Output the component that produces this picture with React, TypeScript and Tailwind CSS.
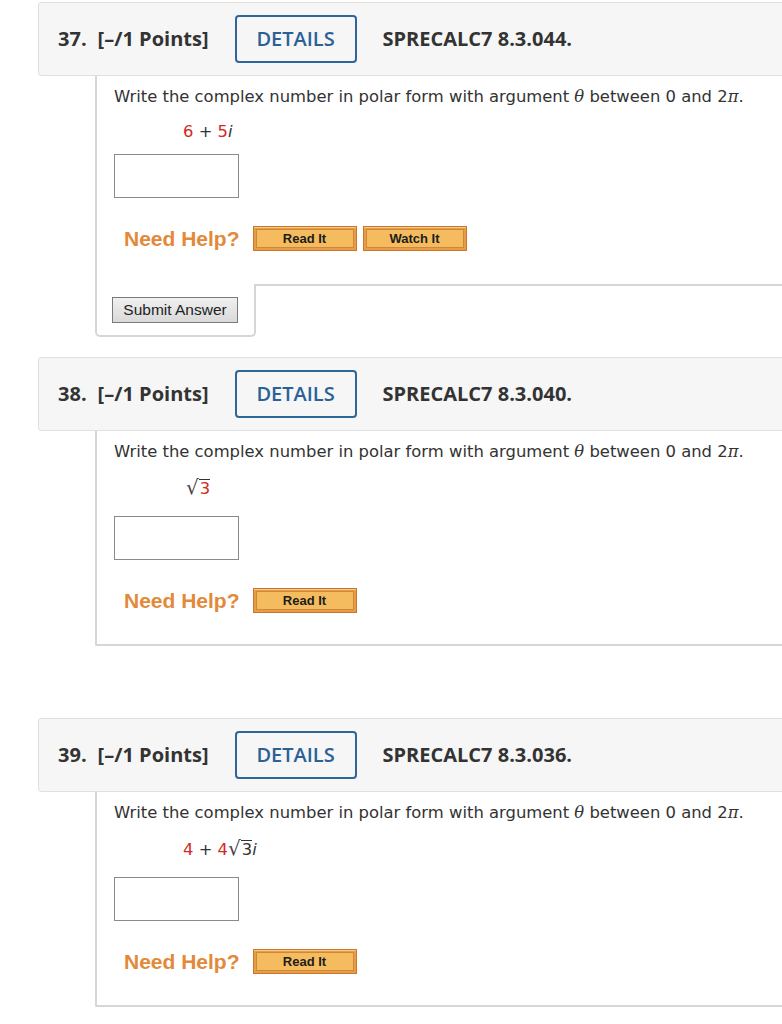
import type { ReactNode } from "react";

const openSans = { fontFamily: '"Open Sans", "Liberation Sans", sans-serif' };

function HelpButton({ label }: { label: string }) {
  return (
    <button className="h-[25px] w-[104px] border border-[#c9782a] bg-[#e69c48] p-[2px] shadow-[inset_0_1px_0_#f6c98c]">
      <span className="flex h-full w-full items-center justify-center border border-[#cf8838] bg-[#f4bc5e] font-['Liberation_Sans',Arial,sans-serif] text-[13px] font-bold leading-none text-[#1c1c1c]">
        {label}
      </span>
    </button>
  );
}

function Header({ num, code }: { num: number; code: string }) {
  return (
    <div
      className="ml-[38px] flex h-[74px] items-center rounded-[3px] border border-[#e0e0e0] bg-[#f6f6f6] pl-[19px] text-[20px] font-bold text-[#333]"
      style={openSans}
    >
      <span>{num}.</span>
      <span className="ml-[11px]">[–/1 Points]</span>
      <button className="ml-[26px] flex h-[48px] w-[122px] items-center justify-center rounded-[4px] border-2 border-[#2f6699] text-[20px] font-semibold text-[#2b6196]">
        DETAILS
      </button>
      <span className="ml-[26px]">{code}</span>
    </div>
  );
}

// radical sign + overlined radicand, sits on the text baseline
function Sqrt({ children }: { children: ReactNode }) {
  return (
    <>
      <span className="text-[20px] text-[#444]">√</span>
      <span className="inline-block border-t border-[#333] pl-[1px] leading-[17px]">{children}</span>
    </>
  );
}

function Prompt() {
  return (
    <div className="flex h-[22px] items-center whitespace-pre">
      Write the complex number in polar form with argument{" "}
      <i className="font-['DejaVu_Serif',serif]">θ</i> between 0 and 2
      <i className="font-['DejaVu_Serif',serif]">π</i>.
    </div>
  );
}

function Question({
  num,
  code,
  math,
  tall,
  watch,
  submit,
}: {
  num: number;
  code: string;
  math: ReactNode;
  tall?: boolean;
  watch?: boolean;
  submit?: boolean;
}) {
  return (
    <div>
      <Header num={num} code={code} />
      <div
        className={`ml-[95px] border-l-2 border-[#d6d6d6] pl-[17px] pt-[10px] font-['DejaVu_Sans',Verdana,sans-serif] text-[16.4px] text-[#333] ${
          submit ? "pb-[33px]" : "border-b-2 rounded-bl-[2px] pb-[31px]"
        }`}
      >
        <Prompt />
        <div
          className={`ml-[69px] mt-[11px] whitespace-pre leading-[19px] ${
            tall ? "h-[29px] pt-[4px]" : "h-[22px] pt-[3px]"
          }`}
        >
          {math}
        </div>
        <div className="mt-[13px] h-[44px] w-[125px] border-[1.5px] border-[#8a8a8a] bg-white" />
        <div className="mt-[28px] flex h-[25px] items-center">
          <span className="ml-[10px] mr-[13px] font-['Liberation_Sans',Arial,sans-serif] text-[21px] font-bold leading-none text-[#e3893a]">
            Need Help?
          </span>
          <HelpButton label="Read It" />
          {watch && (
            <div className="ml-[6px] flex">
              <HelpButton label="Watch It" />
            </div>
          )}
        </div>
      </div>
      {submit && (
        <div className="flex">
          <div className="ml-[95px] w-[161px] rounded-b-[5px] border-x-2 border-b-2 border-[#d6d6d6] pl-[15px] pt-[13px] pb-[12px]">
            <button className="flex h-[26px] w-[126px] items-center justify-center border border-[#7a7a7a] bg-gradient-to-b from-[#f0f0f0] to-[#d9d9d9] font-['Liberation_Sans',Arial,sans-serif] text-[15.5px] text-[#222]">
              Submit Answer
            </button>
          </div>
          <div className="flex-1 border-t-2 border-[#d6d6d6]" />
        </div>
      )}
    </div>
  );
}

export default function App() {
  return (
    <div className="h-[1024px] w-[782px] overflow-hidden bg-white">
      <div className="w-[820px] pt-[2px]">
        <Question
          num={37}
          code="SPRECALC7 8.3.044."
          watch
          submit
          math={
            <span className="text-[#d32a22]">
              6 <span className="text-[#333]">+</span> 5<i className="text-[#333]">i</i>
            </span>
          }
        />
        <div className="h-[20px]" />
        <Question
          num={38}
          code="SPRECALC7 8.3.040."
          tall
          math={
            <span className="ml-[3px] text-[#d32a22]">
              <Sqrt>3</Sqrt>
            </span>
          }
        />
        <div className="h-[72px]" />
        <Question
          num={39}
          code="SPRECALC7 8.3.036."
          tall
          math={
            <span className="text-[#d32a22]">
              4 <span className="text-[#333]">+</span> 4
              <span className="text-[#333]">
                <Sqrt>3</Sqrt>
              </span>
              <i className="text-[#333]">i</i>
            </span>
          }
        />
      </div>
    </div>
  );
}
